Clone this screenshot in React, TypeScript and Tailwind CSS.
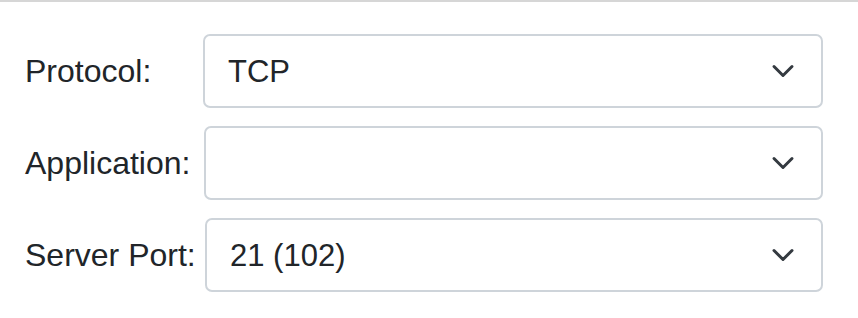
const rows = [
  { label: "Protocol:", value: "TCP", labelWidth: "w-[178px]" },
  { label: "Application:", value: "", labelWidth: "w-[179px]" },
  { label: "Server Port:", value: "21 (102)", labelWidth: "w-[180px]" },
];

const Chevron = () => (
  <svg width="24" height="24" viewBox="0 0 16 16" fill="none" className="flex-none">
    <path
      d="m2 5 6 6 6-6"
      stroke="#343a40"
      strokeWidth="2"
      strokeLinecap="round"
      strokeLinejoin="round"
    />
  </svg>
);

export default function App() {
  return (
    <div className="w-[858px] h-[318px] bg-white font-['Liberation_Sans',Arial,sans-serif] text-[#212529]">
      <div className="h-[2px] bg-[#d6d6d6]" />
      <div className="flex flex-col gap-[18px] pt-[32px] pl-[25px] pr-[35px]">
        {rows.map(({ label, value, labelWidth }) => (
          <div key={label} className="flex items-center">
            <label className={`${labelWidth} flex-none text-[32px] leading-none`}>{label}</label>
            <div className="flex-1 h-[74px] flex items-center border-2 border-[#ced4da] rounded-[7px] bg-white pl-[23px] pr-[26px]">
              <span className="flex-1 text-[31px] leading-none">{value}</span>
              <Chevron />
            </div>
          </div>
        ))}
      </div>
    </div>
  );
}
